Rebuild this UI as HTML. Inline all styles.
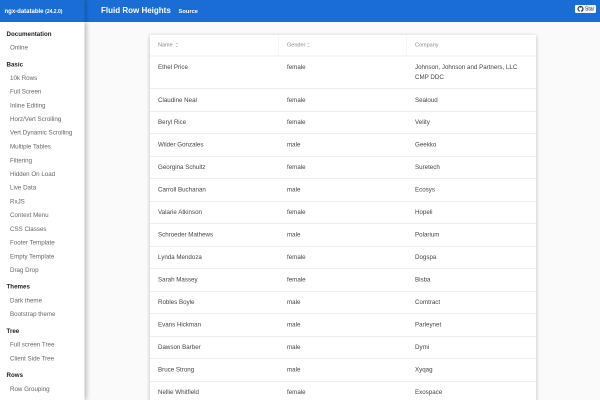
<!DOCTYPE html>
<html>
<head>
<meta charset="utf-8">
<style>
html,body{margin:0;padding:0;width:600px;height:400px;overflow:hidden;background:#fff}
#w{position:absolute;left:0;top:0;width:1200px;height:800px;transform:scale(.5);transform-origin:0 0;background:#fafafa;overflow:hidden;font-family:"Liberation Sans",sans-serif;color:#333;filter:blur(.5px)}
#w div{position:absolute;white-space:nowrap}
#w svg{position:absolute}
.bar{left:0;top:0;width:1200px;height:44px;background:#1b6dd6}
.side{left:0;top:44px;width:169px;height:756px;background:#fff;box-shadow:3px 0 10px rgba(0,0,0,.3)}
.sh{left:0;top:0;width:169px;height:44px;background:#1b6dd6;box-shadow:3px 0 8px rgba(0,0,0,.25);clip-path:inset(0 -20px 0 0)}
.g{left:13px;font-weight:700;color:#222;font-size:12.4px;line-height:20px}
.i{left:20px;color:#666;font-size:12.4px;line-height:20px}
.card{left:300px;top:70px;width:772px;height:760px;background:#fff;box-shadow:0 2px 8px rgba(0,0,0,.25)}
.hl{left:300px;width:772px;height:2px;background:#ededed}
.c1,.c2,.c3{font-size:12.4px;line-height:20px;color:#444}
.c1{left:316px}.c2{left:574px}.c3{left:830px}
.h{font-size:11px;line-height:20px;color:#888;top:80px}
</style>
</head>
<body>
<div id="w">
<div class="bar"></div>
<div class="card"></div>
<div class="side"></div>
<div class="sh"></div>
<div style="left:9px;top:12px;font-size:12px;line-height:20px;font-weight:700;color:#fff">ngx-datatable <span style="font-size:10px">(24.2.0)</span></div>
<div style="left:202px;top:10px;font-size:16px;line-height:24px;font-weight:700;color:#fff">Fluid Row Heights</div>
<div style="left:357px;top:13px;font-size:11.5px;line-height:20px;font-weight:700;color:#fff">Source</div>
<div style="left:1150px;top:10px;width:42px;height:16px;background:#f4f6f8;border-radius:2px"></div>
<svg style="left:1155px;top:12px" width="12" height="12" viewBox="0 0 16 16"><path fill="#24292f" d="M8 0C3.58 0 0 3.58 0 8c0 3.54 2.29 6.53 5.47 7.59.4.07.55-.17.55-.38v-1.34c-2.23.49-2.69-1.07-2.69-1.07-.36-.92-.89-1.17-.89-1.17-.73-.5.05-.49.05-.49.8.06 1.23.83 1.23.83.71 1.22 1.87.87 2.33.66.07-.52.28-.87.5-1.07-1.78-.2-3.64-.89-3.64-3.95 0-.87.31-1.59.82-2.15-.08-.2-.36-1.02.08-2.12 0 0 .67-.21 2.2.82A7.65 7.65 0 0 1 8 3.87c.68 0 1.36.09 2 .27 1.53-1.04 2.2-.82 2.2-.82.44 1.1.16 1.92.08 2.12.51.56.82 1.27.82 2.15 0 3.07-1.87 3.75-3.65 3.95.29.25.54.73.54 1.48v2.19c0 .21.15.46.55.38A8 8 0 0 0 16 8c0-4.42-3.58-8-8-8z"/></svg>
<div style="left:1170px;top:10px;font-size:10px;line-height:17px;color:#24292f">Star</div>

<div style="left:0;top:1px">
<div class="g" style="top:57px">Documentation</div>
<div class="i" style="top:84px">Online</div>
<div class="g" style="top:118px">Basic</div>
<div class="i" style="top:145px">10k Rows</div>
<div class="i" style="top:172px">Full Screen</div>
<div class="i" style="top:200px">Inline Editing</div>
<div class="i" style="top:227px">Horz/Vert Scrolling</div>
<div class="i" style="top:254px">Vert Dynamic Scrolling</div>
<div class="i" style="top:282px">Multiple Tables</div>
<div class="i" style="top:310px">Filtering</div>
<div class="i" style="top:337px">Hidden On Load</div>
<div class="i" style="top:364px">Live Data</div>
<div class="i" style="top:392px">RxJS</div>
<div class="i" style="top:419px">Context Menu</div>
<div class="i" style="top:447px">CSS Classes</div>
<div class="i" style="top:474px">Footer Template</div>
<div class="i" style="top:502px">Empty Template</div>
<div class="i" style="top:529px">Drag Drop</div>
<div class="g" style="top:562px">Themes</div>
<div class="i" style="top:590px">Dark theme</div>
<div class="i" style="top:617px">Bootstrap theme</div>
<div class="g" style="top:651px">Tree</div>
<div class="i" style="top:678px">Full screen Tree</div>
<div class="i" style="top:706px">Client Side Tree</div>
<div class="g" style="top:739px">Rows</div>
<div class="i" style="top:767px">Row Grouping</div>
<div class="i" style="top:794px">Fluid Row Height</div>
</div>

<div class="h" style="left:316px">Name</div>
<svg style="left:351px;top:84px" width="6" height="12" viewBox="0 0 6 12"><path d="M1 4 L3 2 L5 4 M1 8 L3 10 L5 8" fill="none" stroke="#999" stroke-width="1"/></svg>
<div class="h" style="left:574px">Gender</div>
<svg style="left:614px;top:84px" width="6" height="12" viewBox="0 0 6 12"><path d="M1 4 L3 2 L5 4 M1 8 L3 10 L5 8" fill="none" stroke="#999" stroke-width="1"/></svg>
<div class="h" style="left:830px">Company</div>
<div style="left:557px;top:70px;width:1px;height:42px;background:#eee"></div>
<div style="left:813px;top:70px;width:1px;height:42px;background:#eee"></div>

<div class="hl" style="top:111px"></div>
<div class="hl" style="top:176px"></div>
<div class="hl" style="top:222px"></div>
<div class="hl" style="top:266px"></div>
<div class="hl" style="top:312px"></div>
<div class="hl" style="top:356px"></div>
<div class="hl" style="top:402px"></div>
<div class="hl" style="top:446px"></div>
<div class="hl" style="top:492px"></div>
<div class="hl" style="top:536px"></div>
<div class="hl" style="top:582px"></div>
<div class="hl" style="top:626px"></div>
<div class="hl" style="top:672px"></div>
<div class="hl" style="top:716px"></div>
<div class="hl" style="top:762px"></div>

<div class="c1" style="top:124px">Ethel Price</div><div class="c2" style="top:124px">female</div><div class="c3" style="top:124px">Johnson, Johnson and Partners, LLC</div><div class="c3" style="top:144px">CMP DDC</div>
<div class="c1" style="top:190px">Claudine Neal</div><div class="c2" style="top:190px">female</div><div class="c3" style="top:190px">Sealoud</div>
<div class="c1" style="top:234px">Beryl Rice</div><div class="c2" style="top:234px">female</div><div class="c3" style="top:234px">Velity</div>
<div class="c1" style="top:279px">Wilder Gonzales</div><div class="c2" style="top:279px">male</div><div class="c3" style="top:279px">Geekko</div>
<div class="c1" style="top:324px">Georgina Schultz</div><div class="c2" style="top:324px">female</div><div class="c3" style="top:324px">Suretech</div>
<div class="c1" style="top:369px">Carroll Buchanan</div><div class="c2" style="top:369px">male</div><div class="c3" style="top:369px">Ecosys</div>
<div class="c1" style="top:414px">Valarie Atkinson</div><div class="c2" style="top:414px">female</div><div class="c3" style="top:414px">Hopeli</div>
<div class="c1" style="top:459px">Schroeder Mathews</div><div class="c2" style="top:459px">male</div><div class="c3" style="top:459px">Polarium</div>
<div class="c1" style="top:504px">Lynda Mendoza</div><div class="c2" style="top:504px">female</div><div class="c3" style="top:504px">Dogspa</div>
<div class="c1" style="top:549px">Sarah Massey</div><div class="c2" style="top:549px">female</div><div class="c3" style="top:549px">Bisba</div>
<div class="c1" style="top:594px">Robles Boyle</div><div class="c2" style="top:594px">male</div><div class="c3" style="top:594px">Comtract</div>
<div class="c1" style="top:639px">Evans Hickman</div><div class="c2" style="top:639px">male</div><div class="c3" style="top:639px">Parleynet</div>
<div class="c1" style="top:684px">Dawson Barber</div><div class="c2" style="top:684px">male</div><div class="c3" style="top:684px">Dymi</div>
<div class="c1" style="top:729px">Bruce Strong</div><div class="c2" style="top:729px">male</div><div class="c3" style="top:729px">Xyqag</div>
<div class="c1" style="top:774px">Nellie Whitfield</div><div class="c2" style="top:774px">female</div><div class="c3" style="top:774px">Exospace</div>
</div>
</body>
</html>
